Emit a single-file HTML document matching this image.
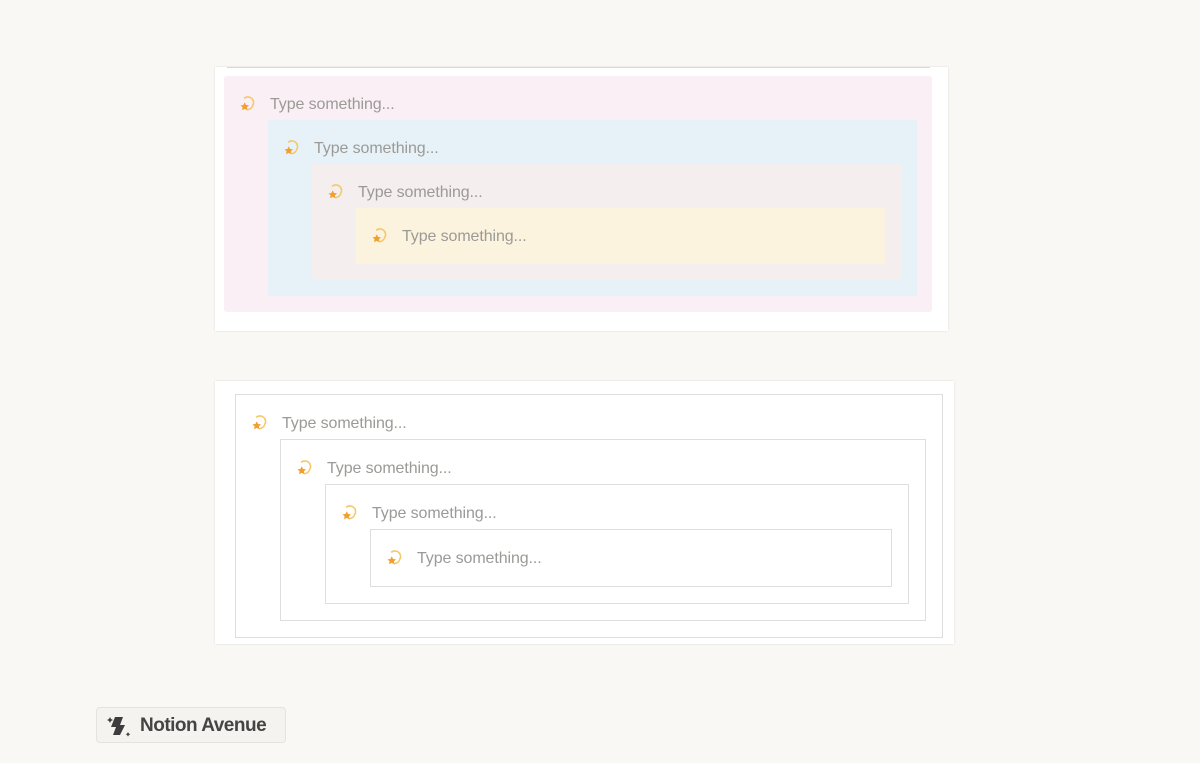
<!DOCTYPE html><html><head><style>
body{margin:0;width:1200px;height:763px;background:#f9f8f4;font-family:"Liberation Sans",sans-serif;position:relative;overflow:hidden}
.a{position:absolute;box-sizing:border-box}
.t{position:absolute;font-size:16px;color:#9b9a97;line-height:18px;white-space:nowrap;letter-spacing:-0.1px}
.i{position:absolute;width:18px;height:18px}
</style></head><body>
<div class="a" style="left:215px;top:67px;width:733px;height:264px;background:#fff;box-shadow:0 0 2px rgba(0,0,0,0.12)"></div>
<div class="a" style="left:227px;top:67px;width:703px;height:1px;background:#d8d8d5"></div>
<div class="a" style="left:224px;top:76px;width:708px;height:236px;background:#f9eff4;border-radius:3px"></div>
<div class="a" style="left:268px;top:120px;width:649px;height:176px;background:#e7f2f8"></div>
<div class="a" style="left:312px;top:164px;width:589px;height:116px;background:#f4eeee"></div>
<div class="a" style="left:356px;top:208px;width:529px;height:56px;background:#fbf3dd"></div>

<div class="a" style="left:215px;top:381px;width:739px;height:263px;background:#fff;box-shadow:0 0 2px rgba(0,0,0,0.12)"></div>
<div class="a" style="left:235px;top:394px;width:708px;height:244px;border:1px solid #dedede"></div>
<div class="a" style="left:280px;top:439px;width:646px;height:182px;border:1px solid #dedede"></div>
<div class="a" style="left:325px;top:484px;width:584px;height:120px;border:1px solid #dedede"></div>
<div class="a" style="left:370px;top:529px;width:522px;height:58px;border:1px solid #dedede"></div>

<svg width="0" height="0" style="position:absolute"><defs><symbol id="s" viewBox="0 0 16 16"><path d="M5.5 3A5 5 0 0 1 13 9.5a5 5 0 0 1-5 3.5" fill="none" stroke="#f5c86b" stroke-width="1.4"/><path d="M6 6.5l1.2 2.4 2.6.3-1.9 1.8.5 2.6L6 12.3l-2.4 1.3.5-2.6L2.2 9.2l2.6-.3z" fill="#f0a030"/></symbol></defs></svg>
<svg class="i" style="left:238px;top:95px"><use href="#s"/></svg><div class="t" style="left:270px;top:96px">Type something...</div>
<svg class="i" style="left:282px;top:139px"><use href="#s"/></svg><div class="t" style="left:314px;top:140px">Type something...</div>
<svg class="i" style="left:326px;top:183px"><use href="#s"/></svg><div class="t" style="left:358px;top:184px">Type something...</div>
<svg class="i" style="left:370px;top:227px"><use href="#s"/></svg><div class="t" style="left:402px;top:228px">Type something...</div>
<svg class="i" style="left:250px;top:414px"><use href="#s"/></svg><div class="t" style="left:282px;top:415px">Type something...</div>
<svg class="i" style="left:295px;top:459px"><use href="#s"/></svg><div class="t" style="left:327px;top:460px">Type something...</div>
<svg class="i" style="left:340px;top:504px"><use href="#s"/></svg><div class="t" style="left:372px;top:505px">Type something...</div>
<svg class="i" style="left:385px;top:549px"><use href="#s"/></svg><div class="t" style="left:417px;top:550px">Type something...</div>

<div class="a" style="left:96px;top:707px;width:190px;height:36px;background:#f4f3ef;border:1px solid #e4e3df;border-radius:4px"></div>
<svg style="position:absolute;left:106px;top:713px" width="26" height="26" viewBox="0 0 26 26"><path d="M9 4h8l-3 8h5l-5 10H7l3-8H5z" fill="#3d3d3d"/><path d="M4 4l1 2 2 1-2 1-1 2-1-2-2-1 2-1z" fill="#3d3d3d"/><path d="M22 19l.8 1.5 1.5.8-1.5.8-.8 1.5-.8-1.5-1.5-.8 1.5-.8z" fill="#3d3d3d"/></svg>
<div class="t" style="left:140px;top:716px;font-size:19px;font-weight:bold;color:#444;line-height:20px;letter-spacing:-0.5px">Notion Avenue</div>
</body></html>
